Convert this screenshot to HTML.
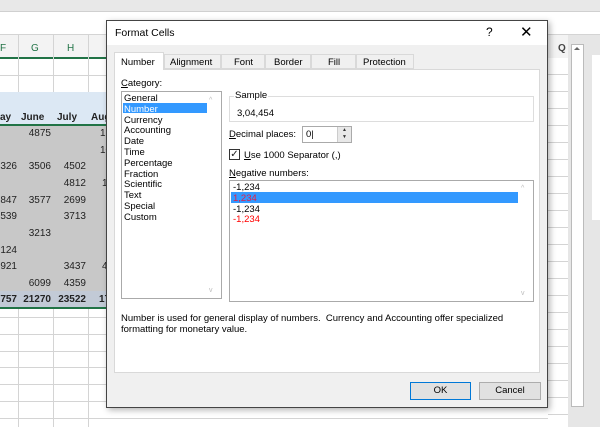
<!DOCTYPE html>
<html><head><style>
*{margin:0;padding:0;box-sizing:border-box}
body{width:600px;height:427px;overflow:hidden;background:#fff;font-family:"Liberation Sans",sans-serif;position:relative;font-size:9px;color:#222}
.a{position:absolute}
.n{position:absolute;font-size:10px;color:#222;text-align:right;width:34px}
.dl{font-size:9.5px;color:#000}
</style></head><body>
<div class="a" style="left:0;top:0;width:600px;height:12px;background:#e8e8e8;border-bottom:1px solid #d0d0d0"></div>
<div class="a" style="left:0;top:34px;width:600px;height:24px;background:#f3f3f3;border-top:1px solid #d4d4d4"></div>
<div class="a" style="left:0;top:57px;width:107px;height:2px;background:#217346"></div>
<div class="a" style="left:0;top:43px;font-size:10px;color:#217346">F</div>
<div class="a" style="left:31px;top:43px;font-size:10px;color:#217346">G</div>
<div class="a" style="left:67px;top:43px;font-size:10px;color:#217346">H</div>
<div class="a" style="left:18px;top:35px;width:1px;height:392px;background:#d4d4d4"></div>
<div class="a" style="left:53px;top:35px;width:1px;height:392px;background:#d4d4d4"></div>
<div class="a" style="left:88px;top:35px;width:1px;height:392px;background:#d4d4d4"></div>
<div class="a" style="left:0;top:75px;width:600px;height:1px;background:#d4d4d4"></div>
<div class="a" style="left:0;top:317px;width:600px;height:1px;background:#d4d4d4"></div>
<div class="a" style="left:0;top:334px;width:600px;height:1px;background:#d4d4d4"></div>
<div class="a" style="left:0;top:351px;width:600px;height:1px;background:#d4d4d4"></div>
<div class="a" style="left:0;top:367px;width:600px;height:1px;background:#d4d4d4"></div>
<div class="a" style="left:0;top:384px;width:600px;height:1px;background:#d4d4d4"></div>
<div class="a" style="left:0;top:401px;width:600px;height:1px;background:#d4d4d4"></div>
<div class="a" style="left:0;top:418px;width:600px;height:1px;background:#d4d4d4"></div>
<div class="a" style="left:0;top:92px;width:107px;height:33px;background:#dce8f4"></div>
<div class="a" style="left:0;top:124px;width:107px;height:2px;background:#217346"></div>
<div class="a" style="left:0;top:112px;font-size:10px;font-weight:bold">ay</div>
<div class="a" style="left:21px;top:112px;font-size:10px;font-weight:bold">June</div>
<div class="a" style="left:57px;top:112px;font-size:10px;font-weight:bold">July</div>
<div class="a" style="left:91px;top:112px;font-size:10px;font-weight:bold">Aug</div>
<div class="a" style="left:0;top:126px;width:107px;height:181px;background:#c8c8c8"></div>
<div class="a" style="left:0;top:291px;width:107px;height:16px;background:#c2cad6"></div>
<div class="a" style="left:0;top:307px;width:107px;height:2px;background:#217346"></div>
<div class="n" style="left:17px;top:128px">4875</div>
<div class="n" style="left:100px;top:128px;text-align:left">1</div>
<div class="n" style="left:100px;top:145px;text-align:left">10</div>
<div class="n" style="left:-17px;top:161px">326</div>
<div class="n" style="left:17px;top:161px">3506</div>
<div class="n" style="left:52px;top:161px">4502</div>
<div class="n" style="left:52px;top:178px">4812</div>
<div class="n" style="left:102px;top:178px;text-align:left">1</div>
<div class="n" style="left:-17px;top:195px">847</div>
<div class="n" style="left:17px;top:195px">3577</div>
<div class="n" style="left:52px;top:195px">2699</div>
<div class="n" style="left:-17px;top:211px">539</div>
<div class="n" style="left:52px;top:211px">3713</div>
<div class="n" style="left:17px;top:228px">3213</div>
<div class="n" style="left:-17px;top:245px">124</div>
<div class="n" style="left:-17px;top:261px">921</div>
<div class="n" style="left:52px;top:261px">3437</div>
<div class="n" style="left:102px;top:261px;text-align:left">4</div>
<div class="n" style="left:17px;top:278px">6099</div>
<div class="n" style="left:52px;top:278px">4359</div>
<div class="n" style="left:-17px;top:294px;font-weight:bold">757</div>
<div class="n" style="left:17px;top:294px;font-weight:bold">21270</div>
<div class="n" style="left:52px;top:294px;font-weight:bold">23522</div>
<div class="n" style="left:99px;top:294px;font-weight:bold;text-align:left">17</div>
<div class="a" style="left:548px;top:58px;width:20px;height:369px;background:repeating-linear-gradient(#fff 0 16px,#d4d4d4 16px 17px)"></div>
<div class="a" style="left:558px;top:43px;font-size:10px;font-weight:bold;color:#444">Q</div>
<div class="a" style="left:568px;top:35px;width:32px;height:392px;background:#e6e6e6"></div>
<div class="a" style="left:571px;top:44px;width:13px;height:363px;background:#fff;border:1px solid #bbb"></div>
<div class="a" style="left:574px;top:47px;width:0;height:0;border-left:3px solid transparent;border-right:3px solid transparent;border-bottom:3px solid #666"></div>
<div class="a" style="left:592px;top:55px;width:8px;height:165px;background:#fff"></div>
<div class="a" style="left:106px;top:20px;width:442px;height:388px;background:#f0f0f0;border:1px solid #444;box-shadow:2px 2px 6px rgba(0,0,0,.3)"></div>
<div class="a" style="left:107px;top:21px;width:440px;height:24px;background:#fff"></div>
<div class="a" style="left:115px;top:27px;font-size:10.5px;color:#000">Format Cells</div>
<div class="a" style="left:486px;top:25px;font-size:12px;color:#000">?</div>
<div class="a" style="left:520px;top:23px;font-size:15px;color:#000">✕</div>
<div class="a" style="left:114px;top:69px;width:426px;height:304px;background:#fff;border:1px solid #d9d9d9"></div>
<div class="a dl" style="left:114px;top:52px;width:50px;height:18px;background:#fff;border:1px solid #d9d9d9;border-bottom:none;padding:4px 0 0 6px">Number</div>
<div class="a dl" style="left:164px;top:54px;width:57px;height:15px;border:1px solid #d9d9d9;padding:2px 0 0 5px">Alignment</div>
<div class="a dl" style="left:221px;top:54px;width:44px;height:15px;border:1px solid #d9d9d9;padding:2px 0 0 12px">Font</div>
<div class="a dl" style="left:265px;top:54px;width:46px;height:15px;border:1px solid #d9d9d9;padding:2px 0 0 8px">Border</div>
<div class="a dl" style="left:311px;top:54px;width:45px;height:15px;border:1px solid #d9d9d9;padding:2px 0 0 16px">Fill</div>
<div class="a dl" style="left:356px;top:54px;width:58px;height:15px;border:1px solid #d9d9d9;padding:2px 0 0 6px">Protection</div>
<div class="a dl" style="left:121px;top:78px"><u>C</u>ategory:</div>
<div class="a" style="left:121px;top:91px;width:101px;height:208px;border:1px solid #aaa;background:#fff"></div>
<div class="a" style="left:209px;top:97px;font-size:7px;color:#bbb">^</div>
<div class="a" style="left:209px;top:287px;font-size:7px;color:#bbb">v</div>
<div class="a" style="left:123px;top:103px;width:84px;height:10px;background:#3399ff"></div>
<div class="a dl" style="left:124px;top:94px;line-height:10.8px;color:#000">General<br><span style="color:#fff">Number</span><br>Currency<br>Accounting<br>Date<br>Time<br>Percentage<br>Fraction<br>Scientific<br>Text<br>Special<br>Custom</div>
<div class="a" style="left:229px;top:96px;width:305px;height:26px;border:1px solid #ddd"></div>
<div class="a dl" style="left:234px;top:90px;background:#fff;padding:0 1px">Sample</div>
<div class="a dl" style="left:237px;top:108px">3,04,454</div>
<div class="a dl" style="left:229px;top:129px"><u>D</u>ecimal places:</div>
<div class="a" style="left:302px;top:126px;width:50px;height:17px;border:1px solid #aaa;background:#fff"></div>
<div class="a dl" style="left:306px;top:129px">0|</div>
<div class="a" style="left:337px;top:127px;width:14px;height:15px;background:#e8e8e8;border-left:1px solid #ccc;font-size:5px;line-height:7px;text-align:center;color:#333">▲<br>▼</div>
<div class="a" style="left:229px;top:149px;width:11px;height:11px;border:1px solid #333;background:#fff;font-size:10px;line-height:9px;text-align:center">✓</div>
<div class="a dl" style="left:244px;top:150px"><u>U</u>se 1000 Separator (,)</div>
<div class="a dl" style="left:229px;top:168px"><u>N</u>egative numbers:</div>
<div class="a" style="left:229px;top:180px;width:305px;height:122px;border:1px solid #aaa;background:#fff"></div>
<div class="a" style="left:521px;top:185px;font-size:7px;color:#bbb">^</div>
<div class="a" style="left:521px;top:290px;font-size:7px;color:#bbb">v</div>
<div class="a" style="left:231px;top:192px;width:287px;height:11px;background:#3399ff"></div>
<div class="a dl" style="left:233px;top:183px;line-height:10.8px">-1,234<br><span style="color:#e0204a">1,234</span><br>-1,234<br><span style="color:#f00">-1,234</span></div>
<div class="a dl" style="left:121px;top:313px;line-height:11px">Number is used for general display of numbers.&nbsp; Currency and Accounting offer specialized<br>formatting for monetary value.</div>
<div class="a dl" style="left:410px;top:382px;width:61px;height:18px;border:1px solid #0078d7;background:#e1e1e1;text-align:center;line-height:16px">OK</div>
<div class="a dl" style="left:479px;top:382px;width:62px;height:18px;border:1px solid #adadad;background:#e1e1e1;text-align:center;line-height:16px">Cancel</div>
</body></html>
